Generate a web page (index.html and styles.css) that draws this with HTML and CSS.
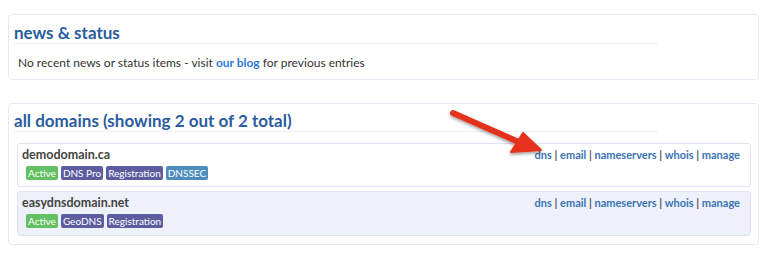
FILE: index.html
```html
<!DOCTYPE html>
<html>
<head>
<meta charset="utf-8">
<link rel="stylesheet" href="styles.css">
</head>
<body>
<div class="page">
  <section class="panel news">
    <h2 class="title">news &amp; status</h2>
    <p class="msg">No recent news or status items - visit <a href="#">our blog</a> for previous entries</p>
  </section>
  <section class="panel domains">
    <h2 class="title">all domains (showing 2 out of 2 total)</h2>
    <div class="row">
      <div class="info">
        <div class="name">demodomain.ca</div>
        <div class="badges"><span class="b green">Active</span><span class="b purple">DNS Pro</span><span class="b purple">Registration</span><span class="b blue">DNSSEC</span></div>
      </div>
      <div class="links"><a href="#">dns</a> | <a href="#">email</a> | <a href="#">nameservers</a> | <a href="#">whois</a> | <a href="#">manage</a></div>
    </div>
    <div class="row alt">
      <div class="info">
        <div class="name">easydnsdomain.net</div>
        <div class="badges"><span class="b green">Active</span><span class="b purple">GeoDNS</span><span class="b purple">Registration</span></div>
      </div>
      <div class="links"><a href="#">dns</a> | <a href="#">email</a> | <a href="#">nameservers</a> | <a href="#">whois</a> | <a href="#">manage</a></div>
    </div>
    <svg class="arrow" width="110" height="60" viewBox="0 0 110 60">
      <defs>
        <filter id="sh" x="-20%" y="-20%" width="140%" height="160%">
          <feDropShadow dx="0" dy="2" stdDeviation="1.5" flood-color="#000" flood-opacity="0.35"/>
        </filter>
      </defs>
      <g filter="url(#sh)">
        <line x1="8" y1="8" x2="76" y2="38" stroke="#e5321e" stroke-width="6" stroke-linecap="round"/>
        <polygon points="96,45 66,47 78,28" fill="#e5321e" stroke="#e5321e" stroke-width="2" stroke-linejoin="round"/>
      </g>
    </svg>
  </section>
</div>
</body>
</html>
```
FILE: styles.css
```css
html, body { margin: 0; padding: 0; background: #fff; }
body { font-family: Lato, "Open Sans", sans-serif; color: #333; }
.page { padding: 14px 9px 0 8px; display: flex; flex-direction: column; gap: 23px; }
.panel {
  border: 1px solid #e4e9f2;
  border-radius: 4px;
  padding: 8px 7px 8px 5px;
  position: relative;
}
.title {
  margin: 0 93px 0 0;
  font-size: 17px;
  font-weight: 700;
  color: #2b5c9e;
  line-height: 20px;
  border-bottom: 1px solid #eef0f4;
}
.news { height: 48px; }
.msg { margin: 11px 0 0 4px; font-size: 12px; line-height: 16px; color: #333; }
.msg a { color: #2f7ad6; font-weight: 700; text-decoration: none; }
.domains { padding-top: 7px; padding-bottom: 8px; }
.domains .title { margin-bottom: 11px; }
.row {
  margin: 0 0 4px 3px;
  border: 1px solid #dfe3ef;
  border-radius: 3px;
  padding: 3px 10px 6px 4px;
  display: flex;
  justify-content: space-between;
  align-items: flex-start;
}
.row:last-of-type { margin-bottom: 0; }
.row.alt { background: #eef1fa; padding-bottom: 7px; }
.name { font-size: 12.5px; font-weight: 700; color: #444; line-height: 16px; }
.badges { display: flex; gap: 3px; margin-top: 3px; margin-left: 4px; }
.b {
  font-size: 10px; line-height: 14px; color: #fff;
  padding: 0 2px; border-radius: 2px;
}
.green { background: #62c062; }
.purple { background: #5d5c9f; }
.blue { background: #4d8dbd; }
.links { font-size: 11px; font-weight: 700; color: #555; line-height: 16px; }
.links a { color: #3a74b4; text-decoration: none; }
.arrow { position: absolute; left: 436px; top: 1px; }
```
